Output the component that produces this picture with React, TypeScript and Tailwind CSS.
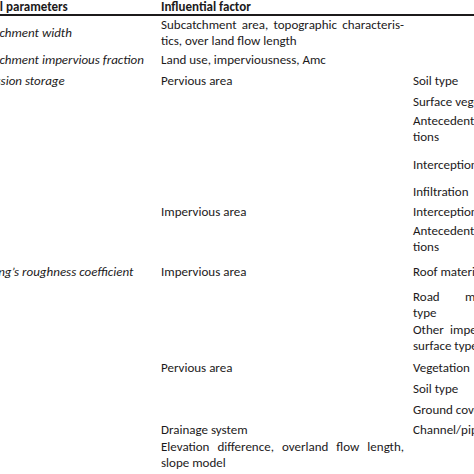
function Line({ children, justify = false }: { children: React.ReactNode; justify?: boolean }) {
  return (
    <div className={justify ? "text-justify [text-align-last:justify] whitespace-nowrap" : "whitespace-nowrap"}>
      {children}
    </div>
  );
}

function Group({
  factor,
  className = "",
  children,
}: {
  factor: React.ReactNode;
  className?: string;
  children?: React.ReactNode;
}) {
  return (
    <div className={"flex " + className}>
      <div className="w-[252px] shrink-0 pr-[9px]">{factor}</div>
      <div className="w-[96px] shrink-0 flex flex-col">{children}</div>
    </div>
  );
}

export default function App() {
  return (
    <div className="w-[474px] h-[474px] overflow-hidden bg-white text-[#1c1a1b] text-[13px] leading-[16px] [font-family:Carlito,Lato,sans-serif]">
      <div className="-ml-[36px] w-[545px] flex flex-col">
        {/* Header */}
        <div className="flex font-bold leading-[14px] border-b-2 border-[#1c1a1b]">
          <div className="w-[197px] shrink-0 whitespace-nowrap pl-[4px]">Model parameters</div>
          <div className="w-[348px] shrink-0">Influential factor</div>
        </div>

        {/* Row 1 */}
        <div className="flex pt-[1px] pb-[3px]">
          <div className="w-[197px] shrink-0 flex items-center italic">Subcatchment width</div>
          <Group
            factor={
              <>
                <Line justify>Subcatchment area, topographic characteris-</Line>
                <Line>tics, over land flow length</Line>
              </>
            }
          />
        </div>

        {/* Row 2 */}
        <div className="flex">
          <div className="w-[197px] shrink-0 italic whitespace-nowrap">Subcatchment impervious fraction</div>
          <Group factor={<Line>Land use, imperviousness, Amc</Line>} />
        </div>

        {/* Row 3 */}
        <div className="flex pt-[5px]">
          <div className="w-[197px] shrink-0 italic">Depression storage</div>
          <div className="w-[348px] shrink-0 flex flex-col">
            <Group factor="Pervious area">
              <Line>Soil type</Line>
              <div className="mt-[5px]">
                <Line>Surface vegetation</Line>
              </div>
              <div className="mt-[3px]">
                <Line>Antecedent condi-</Line>
                <Line>tions</Line>
              </div>
              <div className="mt-[12px]">
                <Line>Interception</Line>
              </div>
              <div className="mt-[11px]">
                <Line>Infiltration</Line>
              </div>
            </Group>
            <Group factor="Impervious area" className="mt-[4px]">
              <Line>Interception</Line>
              <div className="mt-[3px]">
                <Line>Antecedent condi-</Line>
                <Line>tions</Line>
              </div>
            </Group>
          </div>
        </div>

        {/* Row 4 */}
        <div className="flex pt-[9px]">
          <div className="w-[197px] shrink-0 italic whitespace-nowrap">Manning’s roughness coefficient</div>
          <div className="w-[348px] shrink-0 flex flex-col">
            <Group factor="Impervious area">
              <Line>Roof material</Line>
              <div className="mt-[9px]">
                <Line justify>Road material</Line>
                <Line>type</Line>
              </div>
              <div className="mt-[1px]">
                <Line justify>Other impervious</Line>
                <Line>surface type</Line>
              </div>
            </Group>
            <Group factor="Pervious area" className="mt-[6px]">
              <Line>Vegetation</Line>
              <div className="mt-[5px]">
                <Line>Soil type</Line>
              </div>
              <div className="mt-[5px]">
                <Line>Ground cover</Line>
              </div>
            </Group>
            <Group factor="Drainage system" className="mt-[4px]">
              <Line>Channel/pipe</Line>
            </Group>
            <Group
              className="mt-[1px]"
              factor={
                <>
                  <Line justify>Elevation difference, overland flow length,</Line>
                  <Line>slope model</Line>
                </>
              }
            />
          </div>
        </div>
      </div>
    </div>
  );
}
